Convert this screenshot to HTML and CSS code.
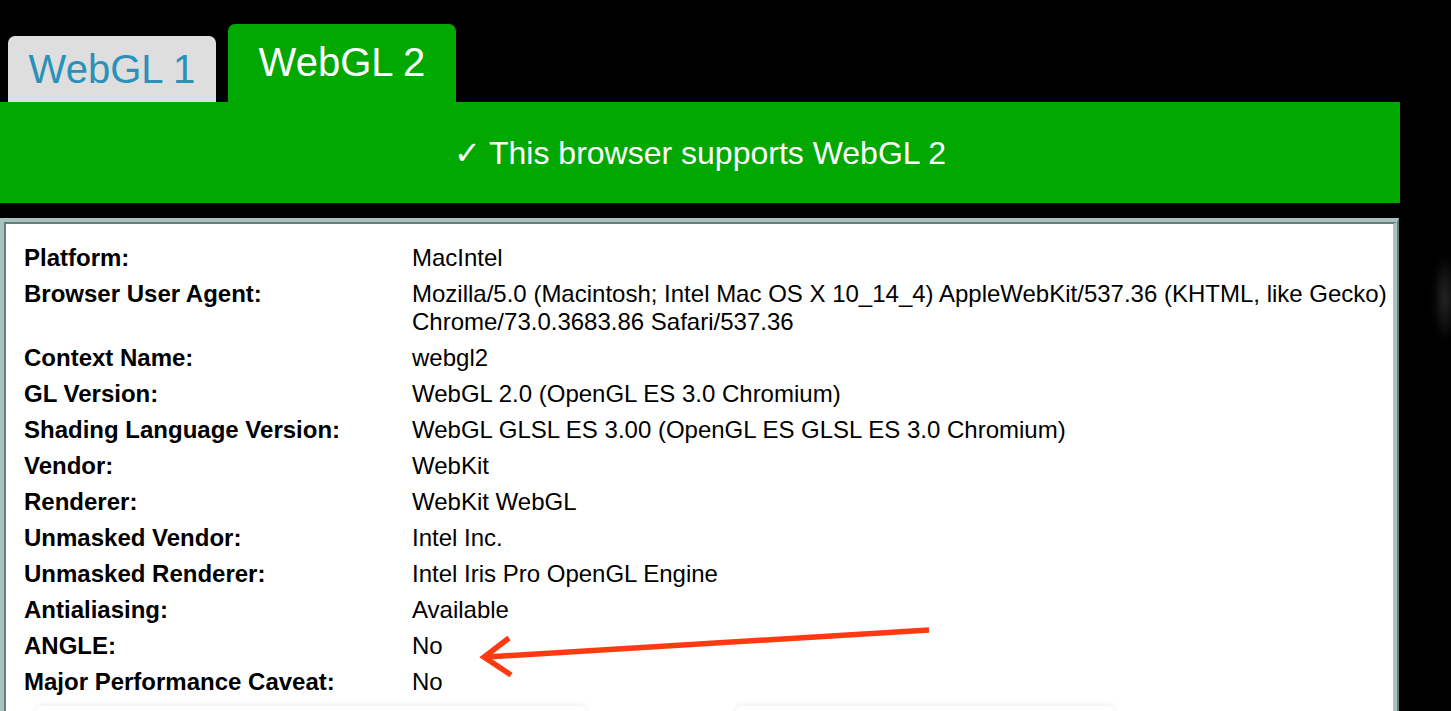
FILE: index.html
```html
<!DOCTYPE html>
<html>
<head>
<meta charset="utf-8">
<title>WebGL Report</title>
<link rel="stylesheet" href="styles.css">
</head>
<body>
<div class="page">
  <div class="tabs">
    <div class="tab tab-inactive">WebGL 1</div>
    <div class="tab tab-active">WebGL 2</div>
  </div>
  <div class="banner">✓ This browser supports WebGL 2</div>
  <div class="panel">
    <div class="panel-inner">
      <div class="rows">
        <div class="label">Platform:</div><div class="value">MacIntel</div>
        <div class="label">Browser User Agent:</div><div class="value">Mozilla/5.0 (Macintosh; Intel Mac OS X 10_14_4) AppleWebKit/537.36 (KHTML, like Gecko) Chrome/73.0.3683.86 Safari/537.36</div>
        <div class="label">Context Name:</div><div class="value">webgl2</div>
        <div class="label">GL Version:</div><div class="value">WebGL 2.0 (OpenGL ES 3.0 Chromium)</div>
        <div class="label">Shading Language Version:</div><div class="value">WebGL GLSL ES 3.00 (OpenGL ES GLSL ES 3.0 Chromium)</div>
        <div class="label">Vendor:</div><div class="value">WebKit</div>
        <div class="label">Renderer:</div><div class="value">WebKit WebGL</div>
        <div class="label">Unmasked Vendor:</div><div class="value">Intel Inc.</div>
        <div class="label">Unmasked Renderer:</div><div class="value">Intel Iris Pro OpenGL Engine</div>
        <div class="label">Antialiasing:</div><div class="value">Available</div>
        <div class="label">ANGLE:</div><div class="value">No</div>
        <div class="label">Major Performance Caveat:</div><div class="value">No</div>
      </div>
      <div class="cards">
        <div class="card card-a"></div>
        <div class="card card-b"></div>
      </div>
    </div>
  </div>
  <div class="glow"></div>
  <svg class="arrow" width="1451" height="711" viewBox="0 0 1451 711">
    <g fill="none" stroke="#ff3a12" stroke-width="5.5" stroke-linecap="butt" stroke-linejoin="miter">
      <line x1="929" y1="630" x2="487" y2="657"/>
      <polyline points="509,638 484,657 511,675"/>
    </g>
  </svg>
</div>
</body>
</html>
```

FILE: styles.css
```css
html, body {
  margin: 0;
  padding: 0;
  background: #000;
  overflow: hidden;
}

.page {
  position: relative;
  width: 1451px;
  height: 711px;
  font-family: "Liberation Sans", Arial, "DejaVu Sans", sans-serif;
}

.tabs {
  display: flex;
  align-items: flex-end;
  gap: 12px;
  height: 102px;
  padding-left: 8px;
  box-sizing: border-box;
}

.tab {
  display: flex;
  align-items: center;
  justify-content: center;
  font-size: 40px;
  border-radius: 7px 7px 0 0;
  box-sizing: border-box;
}

.tab-inactive {
  width: 208px;
  height: 66px;
  background: #dedede;
  color: #2b91b9;
  padding-top: 0;
}

.tab-active {
  width: 228px;
  height: 78px;
  background: #00a800;
  color: #fff;
  padding-bottom: 2px;
}

.banner {
  width: 1400px;
  height: 101px;
  background: #00a800;
  color: #fff;
  font-size: 32px;
  display: flex;
  align-items: center;
  justify-content: center;
}

.panel {
  margin-top: 15px;
  width: 1399px;
  box-sizing: border-box;
  border-style: solid;
  border-width: 4px 2px 0 4px;
  border-color: #a9c2c0 #6b7c7b #6b7c7b #a9c2c0;
  height: 493px;
}

.panel-inner {
  box-sizing: border-box;
  height: 100%;
  background: #fff;
  border-style: solid;
  border-width: 2px 4px 0 2px;
  border-color: #6b7c7b #a9c2c0 #a9c2c0 #6b7c7b;
  padding: 16px 0 0 18px;
}

.rows {
  display: grid;
  grid-template-columns: 388px 1fr;
  font-size: 24px;
  color: #000;
}

.label, .value {
  padding: 4px 0;
  line-height: 28px;
}

.label {
  font-weight: bold;
}

.cards {
  display: flex;
  gap: 150px;
  padding-left: 12px;
  margin-top: 6px;
}

.card {
  height: 40px;
  background: #fff;
  box-shadow: 0 -1px 6px rgba(0, 0, 0, 0.08);
  border-radius: 6px;
}

.card-a { width: 550px; }
.card-b { width: 378px; }

.glow {
  position: absolute;
  left: 1434px;
  top: 256px;
  width: 22px;
  height: 84px;
  border-radius: 50%;
  background: radial-gradient(ellipse at center, rgba(90,90,90,0.45), rgba(50,50,50,0.18) 60%, rgba(0,0,0,0) 80%);
  filter: blur(3px);
}

.arrow {
  position: absolute;
  left: 0;
  top: 0;
  pointer-events: none;
}
```
